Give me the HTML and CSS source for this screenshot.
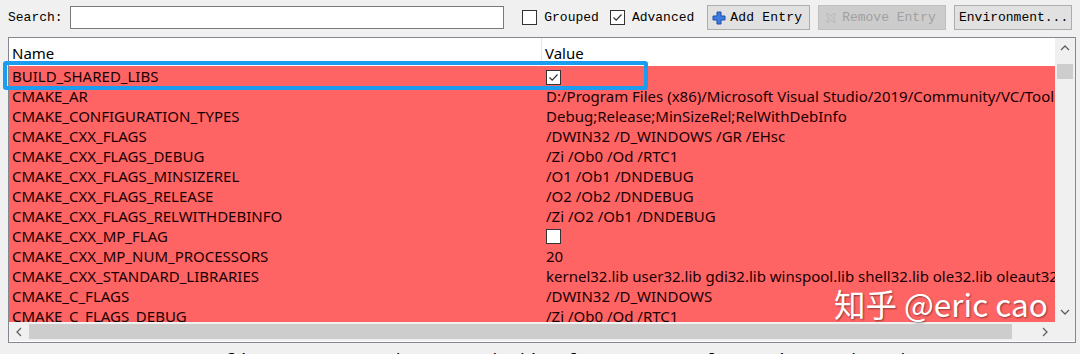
FILE: index.html
```html
<!DOCTYPE html>
<html>
<head>
<meta charset="utf-8">
<link rel="stylesheet" href="styles.css">
</head>
<body>
<div class="app">
  <div class="toolbar">
    <label class="lbl">Search:</label>
    <div class="search"></div>
    <div class="check"><span class="box"></span><span>Grouped</span></div>
    <div class="check"><span class="box"><svg width="13" height="13" viewBox="0 0 13 13"><path d="M2.5 6.5 L5.2 9.2 L10.5 3.5" fill="none" stroke="#333" stroke-width="1.2"/></svg></span><span>Advanced</span></div>
    <button class="btn add"><svg width="14" height="14" viewBox="0 0 14 14"><path d="M5 1h4v4h4v4h-4v4h-4v-4h-4v-4h4z" fill="#3d7be0" stroke="#1c4fa8" stroke-width="1"/></svg>Add Entry</button>
    <button class="btn disabled"><svg width="14" height="14" viewBox="0 0 14 14"><path d="M2 4l2-2 3 3 3-3 2 2-3 3 3 3-2 2-3-3-3 3-2-2 3-3z" fill="#c8c8c8" stroke="#b8b8b8" stroke-width="0.8"/></svg>Remove Entry</button>
    <button class="btn env">Environment...</button>
  </div>

  <div class="frame">
    <div class="main">
      <div class="view">
        <div class="header">
          <div class="hcell name">Name</div>
          <div class="hcell value">Value</div>
        </div>
        <div class="rows">
          <div class="row"><div class="c name">BUILD_SHARED_LIBS</div><div class="c value"><span class="cb"><svg width="13" height="13" viewBox="0 0 13 13"><path d="M2.5 6.5 L5.2 9.2 L10.5 3.5" fill="none" stroke="#333" stroke-width="1.2"/></svg></span></div></div>
          <div class="row"><div class="c name">CMAKE_AR</div><div class="c value">D:/Program Files (x86)/Microsoft Visual Studio/2019/Community/VC/Tools/MSVC/14.29.30133/bin/Hostx64/x64/lib.exe</div></div>
          <div class="row"><div class="c name">CMAKE_CONFIGURATION_TYPES</div><div class="c value">Debug;Release;MinSizeRel;RelWithDebInfo</div></div>
          <div class="row"><div class="c name">CMAKE_CXX_FLAGS</div><div class="c value">/DWIN32 /D_WINDOWS /GR /EHsc</div></div>
          <div class="row"><div class="c name">CMAKE_CXX_FLAGS_DEBUG</div><div class="c value">/Zi /Ob0 /Od /RTC1</div></div>
          <div class="row"><div class="c name">CMAKE_CXX_FLAGS_MINSIZEREL</div><div class="c value">/O1 /Ob1 /DNDEBUG</div></div>
          <div class="row"><div class="c name">CMAKE_CXX_FLAGS_RELEASE</div><div class="c value">/O2 /Ob2 /DNDEBUG</div></div>
          <div class="row"><div class="c name">CMAKE_CXX_FLAGS_RELWITHDEBINFO</div><div class="c value">/Zi /O2 /Ob1 /DNDEBUG</div></div>
          <div class="row"><div class="c name">CMAKE_CXX_MP_FLAG</div><div class="c value"><span class="cb"></span></div></div>
          <div class="row"><div class="c name">CMAKE_CXX_MP_NUM_PROCESSORS</div><div class="c value">20</div></div>
          <div class="row"><div class="c name">CMAKE_CXX_STANDARD_LIBRARIES</div><div class="c value">kernel32.lib user32.lib gdi32.lib winspool.lib shell32.lib ole32.lib oleaut32.lib uuid.lib comdlg32.lib advapi32.lib</div></div>
          <div class="row"><div class="c name">CMAKE_C_FLAGS</div><div class="c value">/DWIN32 /D_WINDOWS</div></div>
          <div class="row"><div class="c name">CMAKE_C_FLAGS_DEBUG</div><div class="c value">/Zi /Ob0 /Od /RTC1</div></div>
        </div>
      </div>
      <div class="vscroll">
        <div class="arrow">
          <svg width="10" height="6" viewBox="0 0 10 6"><path d="M1 5 L5 1 L9 5" fill="none" stroke="#606060" stroke-width="1.3"/></svg>
        </div>
        <div class="vthumb"></div>
        <div class="vtrack"></div>
        <div class="arrow">
          <svg width="10" height="6" viewBox="0 0 10 6"><path d="M1 1 L5 5 L9 1" fill="none" stroke="#606060" stroke-width="1.3"/></svg>
        </div>
      </div>
    </div>
    <div class="hscroll">
      <div class="harrow">
        <svg width="6" height="10" viewBox="0 0 6 10"><path d="M5 1 L1 5 L5 9" fill="none" stroke="#606060" stroke-width="1.3"/></svg>
      </div>
      <div class="hthumb"></div>
      <div class="htrack"></div>
      <div class="harrow">
        <svg width="6" height="10" viewBox="0 0 6 10"><path d="M1 1 L5 5 L1 9" fill="none" stroke="#606060" stroke-width="1.3"/></svg>
      </div>
      <div class="corner"></div>
    </div>
  </div>

  <div class="status">Press Configure to update and display new values in red, then press Generate to generate selected build files.</div>

  <div class="highlight"></div>
  <div class="watermark">知乎 @eric cao</div>
</div>
</body>
</html>
```

FILE: styles.css
```css
html, body {
  margin: 0;
  padding: 0;
  background: #f0f0f0;
}
.app {
  position: relative;
  width: 1080px;
  height: 354px;
  overflow: hidden;
  font-family: "Liberation Mono", "DejaVu Sans Mono", monospace;
  font-size: 13px;
  color: #000;
}
.toolbar {
  display: flex;
  align-items: center;
  height: 25px;
  padding: 5px 0 0 8px;
}
.lbl {
  width: 62px;
}
.search {
  width: 433px;
  height: 21px;
  background: #fff;
  border: 1px solid #7a7a7a;
  margin-right: 18px;
}
.check {
  display: flex;
  align-items: center;
  margin-right: 11px;
}
.box {
  width: 13px;
  height: 13px;
  border: 1px solid #333;
  background: #fff;
  margin-right: 7px;
  display: flex;
}
.btn {
  display: flex;
  align-items: center;
  height: 25px;
  padding: 0 4px;
  font-family: "Liberation Mono", "DejaVu Sans Mono", monospace;
  font-size: 13px;
  color: #000;
  background: #e1e1e1;
  border: 1px solid #adadad;
  margin-right: 8px;
  box-sizing: border-box;
}
.btn svg {
  margin-right: 4px;
  flex: none;
}
.btn.add {
  width: 103px;
  margin-left: 2px;
  padding-left: 4px;
  letter-spacing: 0.2px;
}
.btn.disabled {
  width: 128px;
  padding-left: 5px;
  color: #a0a0a0;
  background: #cccccc;
  border-color: #bfbfbf;
}
.btn.env {
  width: 118px;
}
.frame {
  margin: 7px 4px 0 8px;
  border: 1px solid #828790;
  background: #fff;
  height: 304px;
  display: flex;
  flex-direction: column;
}
.main {
  display: flex;
  height: 284px;
}
.view {
  flex: 1;
  overflow: hidden;
  font-family: "Noto Sans", "Open Sans", sans-serif;
  font-size: 15px;
}
.header {
  display: flex;
  height: 28px;
  background: #fff;
}
.hcell {
  padding: 5px 0 0 3px;
  box-sizing: border-box;
  color: #000;
}
.hcell.name {
  width: 533px;
  border-right: 1px solid #e5e5e5;
}
.rows {
  background: #ff6464;
}
.row {
  display: flex;
  height: 20px;
  line-height: 21px;
  white-space: nowrap;
  color: #1a0000;
}
.c {
  overflow: hidden;
  padding-left: 3px;
  box-sizing: border-box;
}
.c.name { width: 534px; }
.c.value { flex: 1; }
.cb {
  display: inline-flex;
  width: 13px;
  height: 13px;
  border: 1px solid #333;
  background: #fff;
  vertical-align: -2px;
}
.vscroll {
  width: 20px;
  background: #f0f0f0;
  display: flex;
  flex-direction: column;
}
.arrow {
  height: 20px;
  display: flex;
  align-items: center;
  justify-content: center;
}
.vthumb {
  height: 15px;
  margin: 6px 2px 0;
  background: #cdcdcd;
}
.vtrack { flex: 1; }
.hscroll {
  display: flex;
  height: 19px;
  background: #f0f0f0;
}
.harrow {
  width: 20px;
  display: flex;
  align-items: center;
  justify-content: center;
}
.hthumb {
  width: 983px;
  margin: 2px 0;
  background: #cdcdcd;
}
.htrack { flex: 1; }
.corner {
  width: 20px;
  background: #f0f0f0;
}
.status {
  padding: 8px 0 0 100px;
  white-space: nowrap;
  font-size: 18px;
  letter-spacing: 3px;
}
.highlight {
  position: absolute;
  left: 3px;
  top: 61px;
  width: 637px;
  height: 21px;
  border: 4px solid #1a9cf0;
  border-radius: 3px;
}
.watermark {
  position: absolute;
  left: 834px;
  top: 280px;
  font-family: "Noto Sans CJK SC", "Noto Sans", sans-serif;
  font-size: 31.5px;
  color: #fff;
  text-shadow: 1px 1px 2px rgba(0,0,0,0.45);
  white-space: nowrap;
}
```
